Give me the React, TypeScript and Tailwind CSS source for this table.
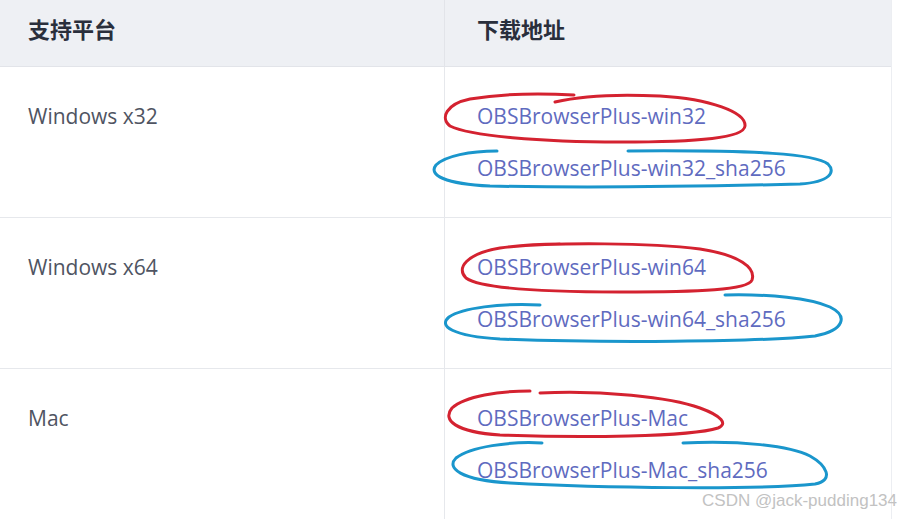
import React from 'react';

const rows = [
  { platform: 'Windows x32', links: ['OBSBrowserPlus-win32', 'OBSBrowserPlus-win32_sha256'] },
  { platform: 'Windows x64', links: ['OBSBrowserPlus-win64', 'OBSBrowserPlus-win64_sha256'] },
  { platform: 'Mac', links: ['OBSBrowserPlus-Mac', 'OBSBrowserPlus-Mac_sha256'] },
];

// hand-drawn marker circles, in page coordinates
const Marks: React.FC = () => (
  <svg className="absolute inset-0 pointer-events-none" width="901" height="519" viewBox="0 0 901 519" fill="none" strokeLinecap="round" strokeLinejoin="round">
    {/* red: win32 */}
    <path
      d="M555 102 C580 96 620 94 660 96 C710 99 746 112 745 126 C744 138 700 142 620 142 C540 142 470 136 450 126 C440 118 446 104 470 99 C500 94 540 93 574 95"
      stroke="#d42230" strokeWidth="3"
    />
    {/* blue: win32_sha256 */}
    <path
      d="M497 151 C470 151 445 156 436 165 C428 175 445 184 490 186 C580 188 720 186 800 184 C830 182 836 172 828 164 C815 154 760 150 628 151"
      stroke="#1a96cc" strokeWidth="3"
    />
    {/* red: win64 */}
    <path
      d="M508 247 C560 242 650 243 700 249 C740 255 756 268 752 280 C748 290 700 292 620 292 C540 292 480 288 466 278 C456 268 466 254 500 248 C520 245 540 244 560 244"
      stroke="#d42230" strokeWidth="3"
    />
    {/* blue: win64_sha256 */}
    <path
      d="M540 305 C500 303 462 308 449 317 C438 326 452 336 500 339 C600 343 760 342 815 336 C845 330 848 316 830 307 C810 298 770 294 725 295"
      stroke="#1a96cc" strokeWidth="3"
    />
    {/* red: Mac */}
    <path
      d="M530 391 C500 391 465 396 452 408 C442 420 455 432 500 435 C580 438 690 437 718 428 C728 424 722 416 700 408 C670 397 600 390 540 393"
      stroke="#d42230" strokeWidth="3"
    />
    {/* blue: Mac_sha256 */}
    <path
      d="M542 443 C510 441 470 447 456 458 C446 468 460 480 510 483 C600 488 760 490 815 484 C835 480 826 465 810 456 C790 446 740 440 683 443"
      stroke="#1a96cc" strokeWidth="3"
    />
  </svg>
);

export default function App() {
  return (
    <div className="relative w-[901px] h-[519px] overflow-hidden bg-white font-['Open_Sans','Noto_Sans_CJK_SC',sans-serif]">
      <div className="w-[892px] border-r border-[#eceef2]">
        {/* header */}
        <div className="flex h-[67px] bg-[#eef0f4] border-b border-[#e2e4e9]">
          <div className="w-[445px] border-r border-[#e2e4e9] pl-[28px] pb-[8px] flex items-center text-[22px] font-bold text-[#2a2f3c]">
            支持平台
          </div>
          <div className="flex-1 pl-[32px] pb-[8px] flex items-center text-[22px] font-bold text-[#2a2f3c]">
            下载地址
          </div>
        </div>

        {rows.map((r) => (
          <div key={r.platform} className="flex h-[151px] border-b border-[#e6e8ec]">
            <div className="w-[445px] border-r border-[#e6e8ec] pl-[28px] pt-[35px] text-[21px] leading-[28px] text-[#4f5462]">
              {r.platform}
            </div>
            <div className="flex-1 pl-[32px] pt-[35px] flex flex-col gap-[24px] text-[21px] leading-[28px] text-[#5f6bbf]">
              {r.links.map((l) => (
                <a key={l} href="#" className="w-fit">{l}</a>
              ))}
            </div>
          </div>
        ))}
      </div>

      <Marks />

      <div className="absolute right-[4px] bottom-[8px] text-[17px] leading-[20px] text-[#c2c2c2] font-['Liberation_Sans',sans-serif]">
        CSDN @jack-pudding134
      </div>
    </div>
  );
}
